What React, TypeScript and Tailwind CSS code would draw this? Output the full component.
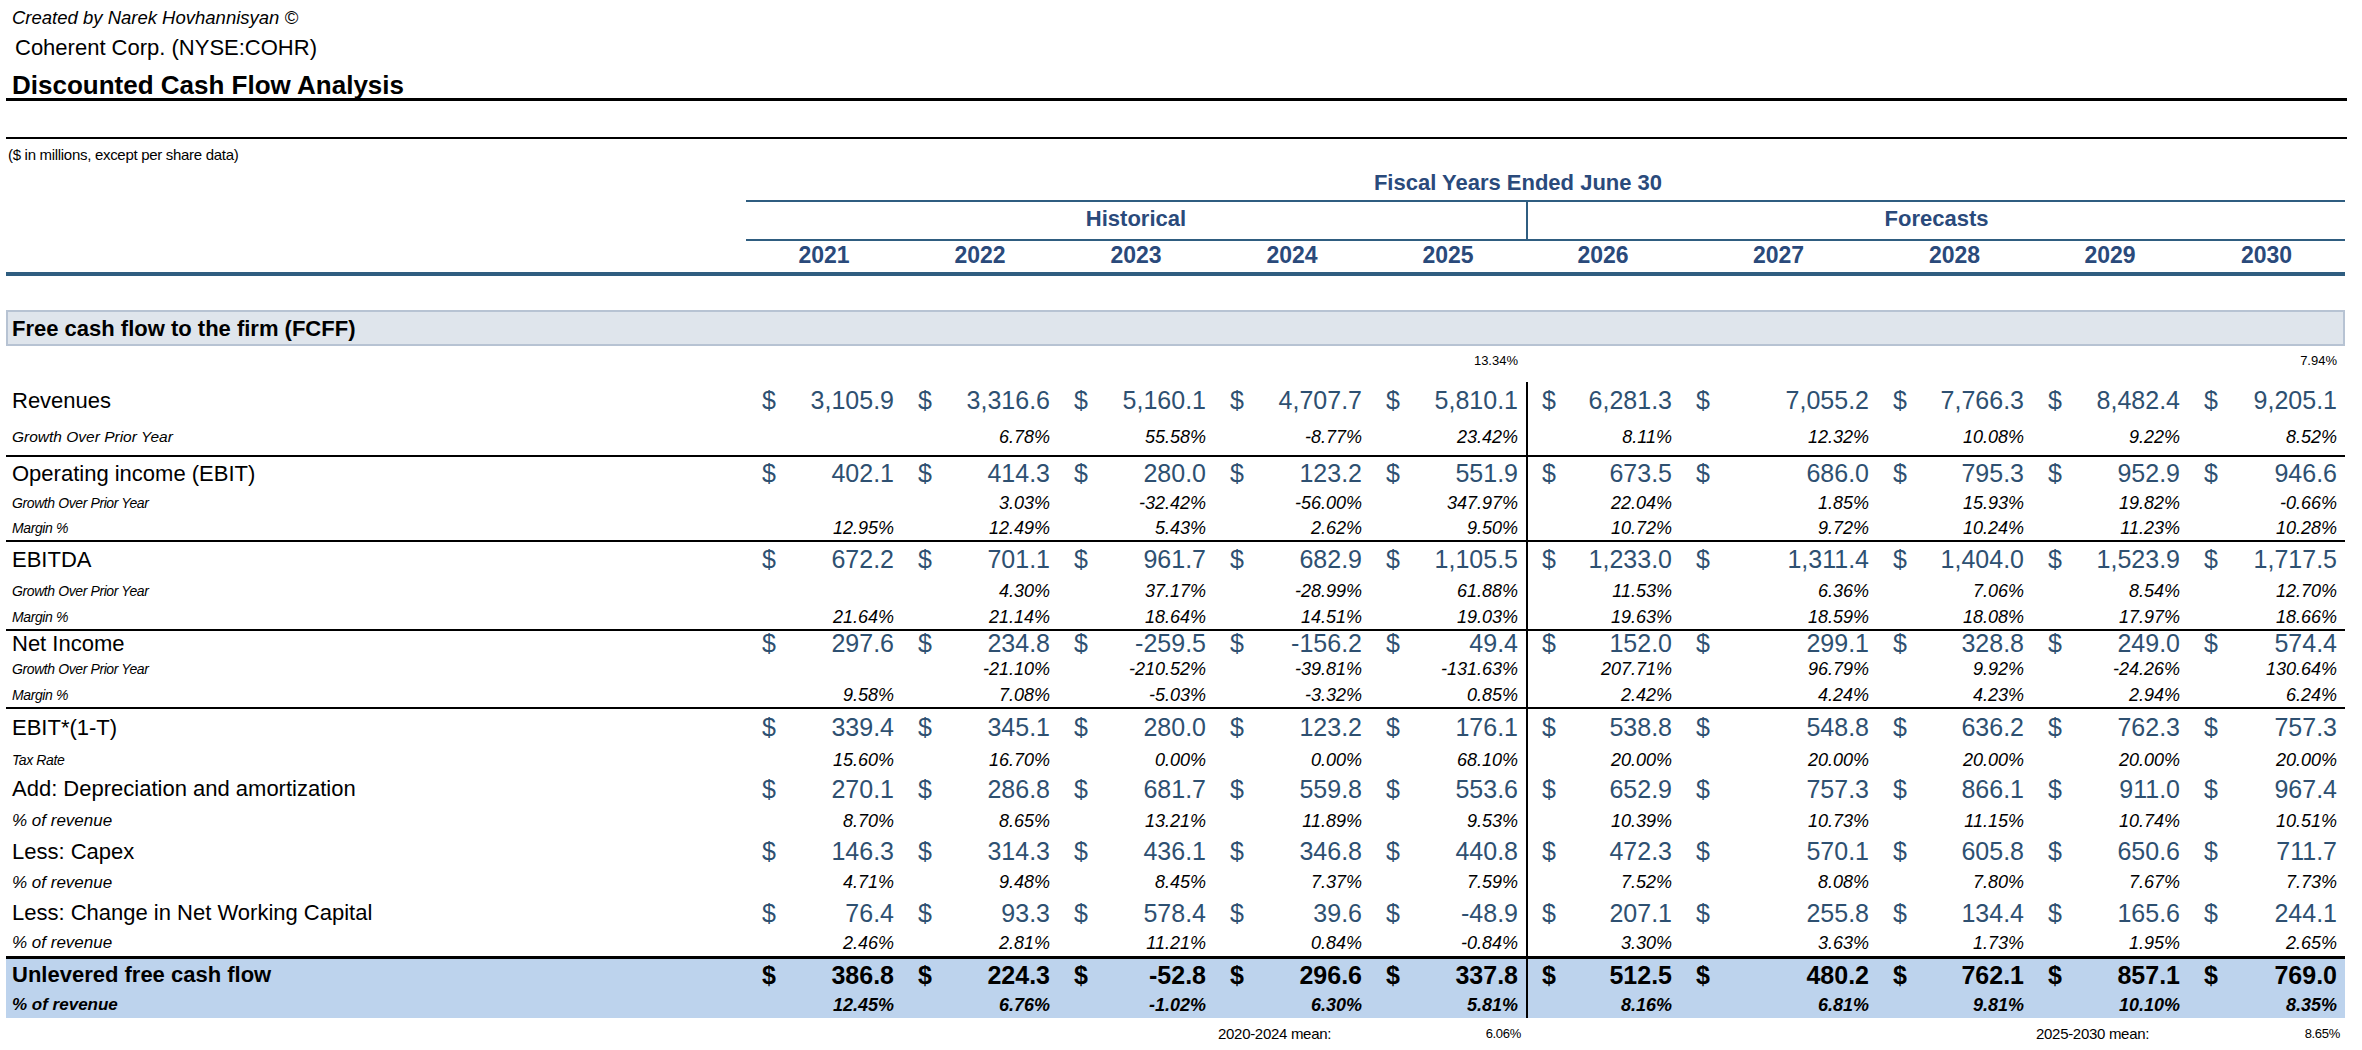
import React from 'react';

const GRID =
  'grid grid-cols-[740px_156px_156px_156px_156px_156px_154px_197px_155px_156px_157px]';

const YEARS = ['2021', '2022', '2023', '2024', '2025', '2026', '2027', '2028', '2029', '2030'];

type Line = {
  label: string;
  kind: 'num' | 'pct';
  values: string[];
  h: string;
  labelCls: string;
  top?: string;
  bold?: boolean;
};

const MAIN = 'text-[22px]';
const SUB_BIG = 'text-[17px] italic';
const SUB_SMALL = 'text-[14px] italic tracking-[-0.4px]';

const ROWS: Line[] = [
  {
    label: 'Revenues',
    kind: 'num',
    h: 'h-[37px]',
    labelCls: MAIN,
    values: ['3,105.9', '3,316.6', '5,160.1', '4,707.7', '5,810.1', '6,281.3', '7,055.2', '7,766.3', '8,482.4', '9,205.1'],
  },
  {
    label: 'Growth Over Prior Year',
    kind: 'pct',
    h: 'h-[36px]',
    labelCls: 'text-[15.5px] italic',
    values: ['', '6.78%', '55.58%', '-8.77%', '23.42%', '8.11%', '12.32%', '10.08%', '9.22%', '8.52%'],
  },
  {
    label: 'Operating income (EBIT)',
    kind: 'num',
    h: 'h-[35px]',
    top: 'border-t-2 border-black',
    labelCls: MAIN,
    values: ['402.1', '414.3', '280.0', '123.2', '551.9', '673.5', '686.0', '795.3', '952.9', '946.6'],
  },
  {
    label: 'Growth Over Prior Year',
    kind: 'pct',
    h: 'h-[25px]',
    labelCls: SUB_SMALL,
    values: ['', '3.03%', '-32.42%', '-56.00%', '347.97%', '22.04%', '1.85%', '15.93%', '19.82%', '-0.66%'],
  },
  {
    label: 'Margin %',
    kind: 'pct',
    h: 'h-[25px]',
    labelCls: SUB_SMALL,
    values: ['12.95%', '12.49%', '5.43%', '2.62%', '9.50%', '10.72%', '9.72%', '10.24%', '11.23%', '10.28%'],
  },
  {
    label: 'EBITDA',
    kind: 'num',
    h: 'h-[37px]',
    top: 'border-t-2 border-black',
    labelCls: MAIN,
    values: ['672.2', '701.1', '961.7', '682.9', '1,105.5', '1,233.0', '1,311.4', '1,404.0', '1,523.9', '1,717.5'],
  },
  {
    label: 'Growth Over Prior Year',
    kind: 'pct',
    h: 'h-[27px]',
    labelCls: SUB_SMALL,
    values: ['', '4.30%', '37.17%', '-28.99%', '61.88%', '11.53%', '6.36%', '7.06%', '8.54%', '12.70%'],
  },
  {
    label: 'Margin %',
    kind: 'pct',
    h: 'h-[25px]',
    labelCls: SUB_SMALL,
    values: ['21.64%', '21.14%', '18.64%', '14.51%', '19.03%', '19.63%', '18.59%', '18.08%', '17.97%', '18.66%'],
  },
  {
    label: 'Net Income',
    kind: 'num',
    h: 'h-[27px]',
    top: 'border-t-2 border-black',
    labelCls: MAIN,
    values: ['297.6', '234.8', '-259.5', '-156.2', '49.4', '152.0', '299.1', '328.8', '249.0', '574.4'],
  },
  {
    label: 'Growth Over Prior Year',
    kind: 'pct',
    h: 'h-[26px]',
    labelCls: SUB_SMALL,
    values: ['', '-21.10%', '-210.52%', '-39.81%', '-131.63%', '207.71%', '96.79%', '9.92%', '-24.26%', '130.64%'],
  },
  {
    label: 'Margin %',
    kind: 'pct',
    h: 'h-[25px]',
    labelCls: SUB_SMALL,
    values: ['9.58%', '7.08%', '-5.03%', '-3.32%', '0.85%', '2.42%', '4.24%', '4.23%', '2.94%', '6.24%'],
  },
  {
    label: 'EBIT*(1-T)',
    kind: 'num',
    h: 'h-[39px]',
    top: 'border-t-2 border-black',
    labelCls: MAIN,
    values: ['339.4', '345.1', '280.0', '123.2', '176.1', '538.8', '548.8', '636.2', '762.3', '757.3'],
  },
  {
    label: 'Tax Rate',
    kind: 'pct',
    h: 'h-[27px]',
    labelCls: SUB_SMALL,
    values: ['15.60%', '16.70%', '0.00%', '0.00%', '68.10%', '20.00%', '20.00%', '20.00%', '20.00%', '20.00%'],
  },
  {
    label: 'Add: Depreciation and amortization',
    kind: 'num',
    h: 'h-[32px]',
    labelCls: MAIN,
    values: ['270.1', '286.8', '681.7', '559.8', '553.6', '652.9', '757.3', '866.1', '911.0', '967.4'],
  },
  {
    label: '% of revenue',
    kind: 'pct',
    h: 'h-[31px]',
    labelCls: SUB_BIG,
    values: ['8.70%', '8.65%', '13.21%', '11.89%', '9.53%', '10.39%', '10.73%', '11.15%', '10.74%', '10.51%'],
  },
  {
    label: 'Less: Capex',
    kind: 'num',
    h: 'h-[31px]',
    labelCls: MAIN,
    values: ['146.3', '314.3', '436.1', '346.8', '440.8', '472.3', '570.1', '605.8', '650.6', '711.7'],
  },
  {
    label: '% of revenue',
    kind: 'pct',
    h: 'h-[30px]',
    labelCls: SUB_BIG,
    values: ['4.71%', '9.48%', '8.45%', '7.37%', '7.59%', '7.52%', '8.08%', '7.80%', '7.67%', '7.73%'],
  },
  {
    label: 'Less: Change in Net Working Capital',
    kind: 'num',
    h: 'h-[32px]',
    labelCls: MAIN,
    values: ['76.4', '93.3', '578.4', '39.6', '-48.9', '207.1', '255.8', '134.4', '165.6', '244.1'],
  },
  {
    label: '% of revenue',
    kind: 'pct',
    h: 'h-[27px]',
    labelCls: SUB_BIG,
    values: ['2.46%', '2.81%', '11.21%', '0.84%', '-0.84%', '3.30%', '3.63%', '1.73%', '1.95%', '2.65%'],
  },
  {
    label: 'Unlevered free cash flow',
    kind: 'num',
    h: 'h-[35px]',
    top: 'border-t-[3px] border-black bg-[#bdd3ed]',
    labelCls: 'text-[22px] font-bold',
    bold: true,
    values: ['386.8', '224.3', '-52.8', '296.6', '337.8', '512.5', '480.2', '762.1', '857.1', '769.0'],
  },
  {
    label: '% of revenue',
    kind: 'pct',
    h: 'h-[27px]',
    top: 'bg-[#bdd3ed]',
    labelCls: 'text-[17px] italic font-bold',
    bold: true,
    values: ['12.45%', '6.76%', '-1.02%', '6.30%', '5.81%', '8.16%', '6.81%', '9.81%', '10.10%', '8.35%'],
  },
];

function BodyRow({ row }: { row: Line }) {
  return (
    <div className={`${GRID} ${row.h} ${row.top ?? ''} leading-none`}>
      <div className={`flex items-center pl-[6px] whitespace-nowrap ${row.labelCls}`}>{row.label}</div>
      {row.values.map((v, i) => {
        const sep = i === 5 ? 'border-l-2 border-black' : '';
        if (row.kind === 'num') {
          return (
            <div
              key={i}
              className={`flex items-center justify-between text-[25px] font-['Liberation_Sans_Narrow','Liberation_Sans',sans-serif] pr-[8px] ${sep} ${
                i === 5 ? 'pl-[14px]' : 'pl-[16px]'
              } ${row.bold ? 'font-bold text-black' : 'text-[#2e5071]'}`}
            >
              <span>$</span>
              <span>{v}</span>
            </div>
          );
        }
        return (
          <div
            key={i}
            className={`flex items-center justify-end pr-[8px] text-[18px] italic text-black ${sep} ${
              row.bold ? 'font-bold' : ''
            }`}
          >
            {v}
          </div>
        );
      })}
    </div>
  );
}

export default function App() {
  return (
    <div className="w-[2362px] h-[1050px] overflow-hidden bg-white text-black font-['Liberation_Sans',Arial,sans-serif]">
      {/* Title block */}
      <div className="h-[36px] flex items-center pl-[12px] text-[18.5px] italic">
        Created by Narek Hovhannisyan ©
      </div>
      <div className="h-[22px] flex items-center pl-[15px] text-[22px]">Coherent Corp. (NYSE:COHR)</div>
      <div className="h-[40px] flex items-end pl-[12px] text-[26px] font-bold leading-[26px]">
        Discounted Cash Flow Analysis
      </div>
      <div className="ml-[6px] w-[2341px] h-[3px] bg-black" />
      <div className="h-[36px]" />
      <div className="ml-[6px] w-[2341px] h-[2px] bg-black" />
      <div className="h-[26px] pt-[8px] pl-[8px] text-[15px] leading-[15px] tracking-[-0.3px]">
        ($ in millions, except per share data)
      </div>

      {/* Column headers */}
      <div className="ml-[6px] w-[2339px] text-[#2a4a7b] font-bold">
        <div className={`${GRID} h-[35px]`}>
          <div />
          <div className="col-span-10 flex items-center justify-center pr-[55px] text-[22px]">
            Fiscal Years Ended June 30
          </div>
        </div>
        <div className={`${GRID} h-[38px]`}>
          <div />
          <div className="col-span-5 flex items-center justify-center pb-[4px] text-[22px] border-y-2 border-[#2f5d80]">
            Historical
          </div>
          <div className="col-span-5 flex items-center justify-center pb-[4px] text-[22px] border-y-2 border-l-2 border-[#2f5d80]">
            Forecasts
          </div>
        </div>
        <div className={`${GRID} h-[34px]`}>
          <div />
          {YEARS.map((y) => (
            <div key={y} className="flex items-center justify-center text-[23px]">
              {y}
            </div>
          ))}
        </div>
        <div className="h-[4px] bg-[#2f5d80]" />
      </div>

      <div className="h-[34px]" />

      {/* Section band */}
      <div className="ml-[6px] w-[2339px] h-[36px] border-2 border-[#b7c3d3] bg-[#dfe5ec] flex items-center pl-[4px] text-[22px] font-bold">
        Free cash flow to the firm (FCFF)
      </div>

      {/* Body */}
      <div className="ml-[6px] w-[2339px]">
        <div className={`${GRID} h-[36px] text-[13px]`}>
          <div />
          <div />
          <div />
          <div />
          <div />
          <div className="flex items-center justify-end pr-[8px] pb-[6px]">13.34%</div>
          <div />
          <div />
          <div />
          <div />
          <div className="flex items-center justify-end pr-[8px] pb-[6px]">7.94%</div>
        </div>

        {ROWS.map((r, idx) => (
          <BodyRow key={idx} row={r} />
        ))}

        <div className={`${GRID} h-[32px] text-[15px] tracking-[-0.3px]`}>
          <div />
          <div />
          <div />
          <div />
          <div className="flex items-center pl-[4px] whitespace-nowrap">2020-2024 mean:</div>
          <div className="flex items-center justify-end pr-[5px] text-[13px]">6.06%</div>
          <div />
          <div />
          <div />
          <div className="flex items-center pl-[4px] whitespace-nowrap">2025-2030 mean:</div>
          <div className="flex items-center justify-end pr-[5px] text-[13px]">8.65%</div>
        </div>
      </div>
    </div>
  );
}
